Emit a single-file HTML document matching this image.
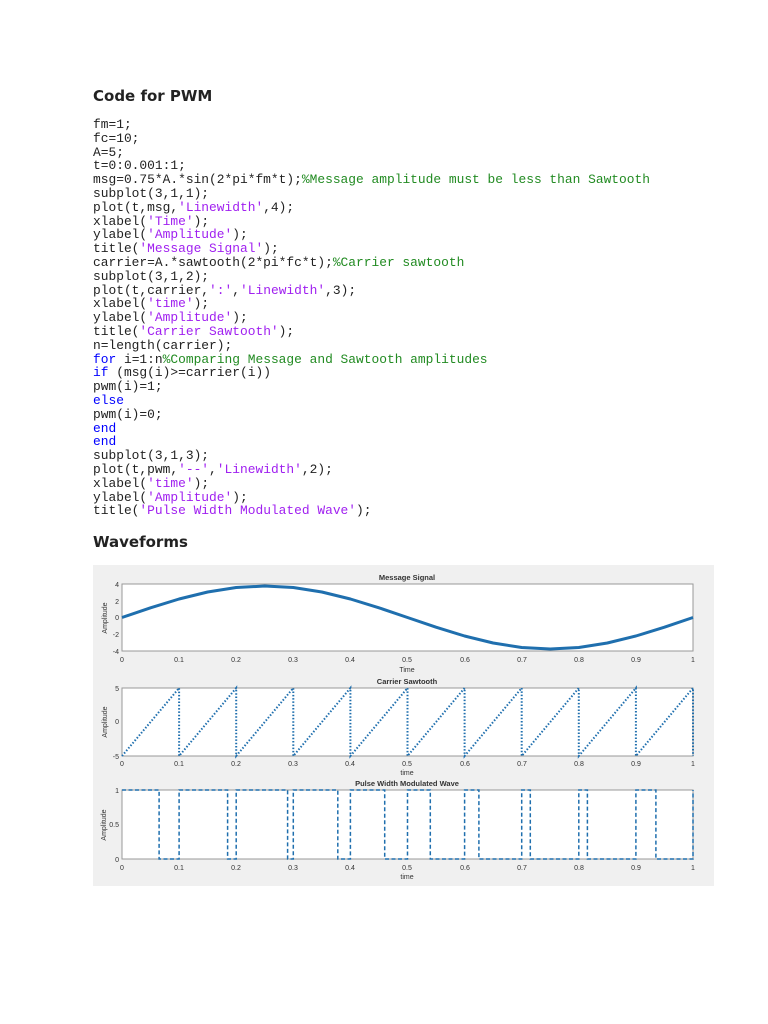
<!DOCTYPE html>
<html><head><meta charset="utf-8"><style>
html,body{margin:0;padding:0;background:#fff;width:768px;height:1024px;overflow:hidden;position:relative}
h2{position:absolute;left:93px;margin:0;font:bold 15px "DejaVu Sans","Liberation Sans",sans-serif;color:#222}
pre{position:absolute;left:93px;top:118px;margin:0;font:12.9px/13.8px "Liberation Mono",monospace;color:#222}
.k{color:#0000ff}.s{color:#a020f0}.c{color:#228b22}
svg{position:absolute;left:0;top:0}
svg text{font-family:"Liberation Sans",sans-serif;fill:#333}
</style></head><body>
<h2 style="top:87px">Code for PWM</h2>
<pre>fm=1;
fc=10;
A=5;
t=0:0.001:1;
msg=0.75*A.*sin(2*pi*fm*t);<span class="c">%Message amplitude must be less than Sawtooth</span>
subplot(3,1,1);
plot(t,msg,<span class="s">'Linewidth'</span>,4);
xlabel(<span class="s">'Time'</span>);
ylabel(<span class="s">'Amplitude'</span>);
title(<span class="s">'Message Signal'</span>);
carrier=A.*sawtooth(2*pi*fc*t);<span class="c">%Carrier sawtooth</span>
subplot(3,1,2);
plot(t,carrier,<span class="s">':'</span>,<span class="s">'Linewidth'</span>,3);
xlabel(<span class="s">'time'</span>);
ylabel(<span class="s">'Amplitude'</span>);
title(<span class="s">'Carrier Sawtooth'</span>);
n=length(carrier);
<span class="k">for</span> i=1:n<span class="c">%Comparing Message and Sawtooth amplitudes</span>
<span class="k">if</span> (msg(i)&gt;=carrier(i))
pwm(i)=1;
<span class="k">else</span>
pwm(i)=0;
<span class="k">end</span>
<span class="k">end</span>
subplot(3,1,3);
plot(t,pwm,<span class="s">'--'</span>,<span class="s">'Linewidth'</span>,2);
xlabel(<span class="s">'time'</span>);
ylabel(<span class="s">'Amplitude'</span>);
title(<span class="s">'Pulse Width Modulated Wave'</span>);</pre>
<h2 style="top:533px">Waveforms</h2>
<svg width="768" height="1024" viewBox="0 0 768 1024">
<rect x="93" y="565" width="621" height="321" fill="#f0f0f0"/>
<rect x="122" y="584" width="571" height="67" fill="#fff" stroke="#999" stroke-width="1"/>
<rect x="122" y="688" width="571" height="68" fill="#fff" stroke="#999" stroke-width="1"/>
<rect x="122" y="790" width="571" height="69" fill="#fff" stroke="#999" stroke-width="1"/>
<g font-size="7.5" text-anchor="middle" font-weight="bold">
<text x="407" y="580">Message Signal</text>
<text x="407" y="684">Carrier Sawtooth</text>
<text x="407" y="786">Pulse Width Modulated Wave</text>
</g>
<g font-size="7" text-anchor="middle">
<text x="407" y="672">Time</text><text x="407" y="775">time</text><text x="407" y="879">time</text>
<g id="xt">
<text x="122" y="662">0</text><text x="179" y="662">0.1</text><text x="236" y="662">0.2</text><text x="293" y="662">0.3</text><text x="350" y="662">0.4</text><text x="407" y="662">0.5</text><text x="465" y="662">0.6</text><text x="522" y="662">0.7</text><text x="579" y="662">0.8</text><text x="636" y="662">0.9</text><text x="693" y="662">1</text>
</g>
<use href="#xt" y="104"/><use href="#xt" y="208"/>
</g>
<g font-size="7" text-anchor="end">
<text x="119" y="587">4</text><text x="119" y="604">2</text><text x="119" y="620">0</text><text x="119" y="637">-2</text><text x="119" y="654">-4</text>
<text x="119" y="691">5</text><text x="119" y="724">0</text><text x="119" y="759">-5</text>
<text x="119" y="793">1</text><text x="119" y="827">0.5</text><text x="119" y="862">0</text>
</g>
<g font-size="7" text-anchor="middle">
<text transform="translate(107,618) rotate(-90)">Amplitude</text>
<text transform="translate(107,722) rotate(-90)">Amplitude</text>
<text transform="translate(106,825) rotate(-90)">Amplitude</text>
</g>
<polyline fill="none" stroke="#1f6fae" stroke-width="3" stroke-linejoin="round" points="122,617.5 150.55,607.8 179.1,599 207.65,592 236.2,587.5 264.75,586 293.3,587.5 321.85,592 350.4,599 378.95,607.8 407.5,617.5 436.05,627.2 464.6,636 493.15,643 521.7,647.5 550.25,649 578.8,647.5 607.35,643 635.9,636 664.45,627.2 693,617.5"/>
<path fill="none" stroke="#1f6fae" stroke-width="2" stroke-dasharray="1.5 1.8" d="M122,756 L179.1,688 V756 L236.2,688 V756 L293.3,688 V756 L350.4,688 V756 L407.5,688 V756 L464.6,688 V756 L521.7,688 V756 L578.8,688 V756 L635.9,688 V756 L693,688 V756"/>
<path fill="none" stroke="#1f6fae" stroke-width="1.5" stroke-dasharray="4 2.5" d="M122,790 H159.1 V859 H179.1 V790 H227.6 V859 H236.2 V790 H287.6 V859 H293.3 V790 H337.8 V859 H350.4 V790 H384.7 V859 H407.5 V790 H430.3 V859 H464.6 V790 H478.9 V859 H521.7 V790 H530.3 V859 H578.8 V790 H587.4 V859 H635.9 V790 H655.9 V859 H693 V790"/>
</svg>
</body></html>
